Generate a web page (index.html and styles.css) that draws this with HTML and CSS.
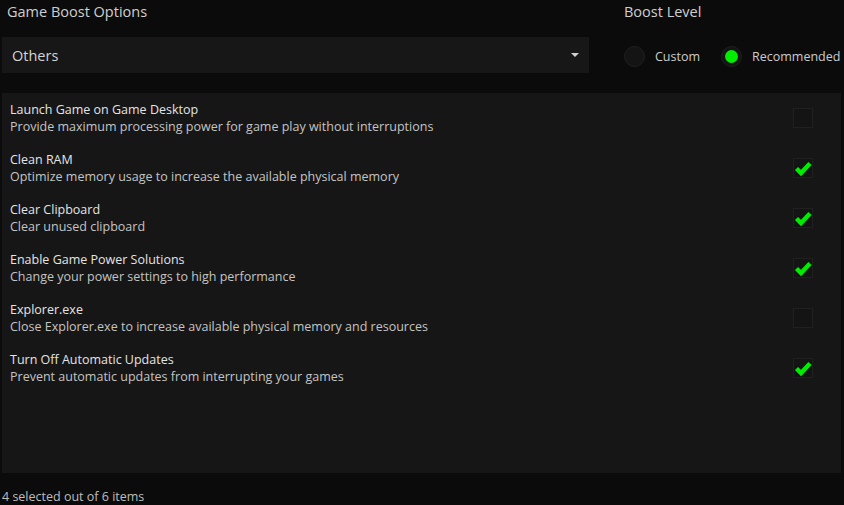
FILE: index.html
```html
<!DOCTYPE html>
<html lang="en">
<head>
    <meta charset="UTF-8">
    <title>Game Boost Options</title>
    <link rel="stylesheet" href="styles.css">
</head>
<body>

    <div class="page">
        <!-- Top section: category picker and boost level -->
        <div class="top-bar">
            <div class="options-col">
                <div class="section-title options-title">Game Boost Options</div>
                <div class="dropdown">
                    <span>Others</span>
                    <span class="dropdown-arrow"></span>
                </div>
            </div>
            <div class="level-col">
                <div class="section-title">Boost Level</div>
                <div class="radio-group">
                    <label class="radio"><span class="radio-dot"></span>Custom</label>
                    <label class="radio checked"><span class="radio-dot"></span>Recommended</label>
                </div>
            </div>
        </div>

        <!-- Options list -->
        <div class="option-list">
            <div class="option-row">
                <div class="option-text">
                    <div class="option-name">Launch Game on Game Desktop</div>
                    <div class="option-desc">Provide maximum processing power for game play without interruptions</div>
                </div>
                <span class="checkbox"></span>
            </div>
            <div class="option-row">
                <div class="option-text">
                    <div class="option-name">Clean RAM</div>
                    <div class="option-desc">Optimize memory usage to increase the available physical memory</div>
                </div>
                <span class="checkbox checked"><svg viewBox="0 0 18 18"><path d="M2.5 9.5l4.5 4.5 9-9.5"/></svg></span>
            </div>
            <div class="option-row">
                <div class="option-text">
                    <div class="option-name">Clear Clipboard</div>
                    <div class="option-desc">Clear unused clipboard</div>
                </div>
                <span class="checkbox checked"><svg viewBox="0 0 18 18"><path d="M2.5 9.5l4.5 4.5 9-9.5"/></svg></span>
            </div>
            <div class="option-row">
                <div class="option-text">
                    <div class="option-name">Enable Game Power Solutions</div>
                    <div class="option-desc">Change your power settings to high performance</div>
                </div>
                <span class="checkbox checked"><svg viewBox="0 0 18 18"><path d="M2.5 9.5l4.5 4.5 9-9.5"/></svg></span>
            </div>
            <div class="option-row">
                <div class="option-text">
                    <div class="option-name">Explorer.exe</div>
                    <div class="option-desc">Close Explorer.exe to increase available physical memory and resources</div>
                </div>
                <span class="checkbox"></span>
            </div>
            <div class="option-row">
                <div class="option-text">
                    <div class="option-name">Turn Off Automatic Updates</div>
                    <div class="option-desc">Prevent automatic updates from interrupting your games</div>
                </div>
                <span class="checkbox checked"><svg viewBox="0 0 18 18"><path d="M2.5 9.5l4.5 4.5 9-9.5"/></svg></span>
            </div>
        </div>

        <div class="summary">4 selected out of 6 items</div>
    </div>

</body>
</html>
```

FILE: styles.css
```css
body {
    font-family: 'Open Sans', 'Noto Sans', sans-serif;
    background-color: #0b0b0b;
    color: #dcdcdc;
    margin: 0;
    padding: 0;
}

.page {
    width: 844px;
    height: 505px;
    overflow: hidden;
}

.top-bar {
    display: flex;
    height: 93px;
}

.options-col {
    flex-shrink: 0;
    width: 587px;
    margin-left: 2px;
}

.section-title {
    font-size: 14.5px;
    color: #cfcfcf;
    height: 37px;
    line-height: 24px;
}

.options-title {
    padding-left: 5px;
}

.dropdown {
    height: 36px;
    background-color: #171717;
    display: flex;
    align-items: center;
    justify-content: space-between;
    padding: 0 10px;
    font-size: 14.5px;
    color: #d4d4d4;
}

.dropdown-arrow {
    width: 0;
    height: 0;
    border-left: 4px solid transparent;
    border-right: 4px solid transparent;
    border-top: 4px solid #d0d0d0;
}

.level-col {
    flex-shrink: 0;
    margin-left: 35px;
}

.radio-group {
    display: flex;
    align-items: center;
    height: 38px;
}

.radio {
    display: flex;
    align-items: center;
    gap: 10px;
    font-size: 12.5px;
    color: #cccccc;
    margin-right: 21px;
}

.radio-dot {
    width: 19px;
    height: 19px;
    border-radius: 50%;
    background-color: #141414;
    border: 1px solid #202020;
    display: flex;
    align-items: center;
    justify-content: center;
}

.radio.checked .radio-dot::after {
    content: "";
    width: 13px;
    height: 13px;
    border-radius: 50%;
    background-color: #00ef00;
}

.option-list {
    margin-left: 2px;
    width: 839px;
    height: 380px;
    background-color: #161616;
    padding-top: 8px;
    box-sizing: border-box;
}

.option-row {
    display: flex;
    justify-content: space-between;
    align-items: flex-start;
    height: 50px;
    padding: 0 28px 0 8px;
}

.option-name {
    font-size: 12.5px;
    line-height: 17px;
    color: #e4e4e4;
}

.option-desc {
    font-size: 12.5px;
    line-height: 17px;
    color: #c4c4c4;
}

.checkbox {
    width: 18px;
    height: 18px;
    margin-top: 7px;
    border: 1px solid #202020;
    background-color: #141414;
}

.checkbox svg {
    width: 18px;
    height: 18px;
    display: block;
}

.checkbox svg path {
    fill: none;
    stroke: #00ec00;
    stroke-width: 4.5;
}

.summary {
    font-size: 12.5px;
    line-height: 16px;
    color: #bdbdbd;
    margin-top: 16px;
    padding-left: 2px;
}
```
